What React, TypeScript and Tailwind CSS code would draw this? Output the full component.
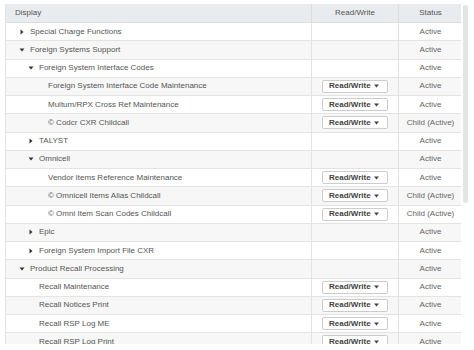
type Row = {
  label: string;
  level: number;
  caret?: "open" | "closed";
  rw?: boolean;
  status: string;
};

const rows: Row[] = [
  { label: "Special Charge Functions", level: 0, caret: "closed", status: "Active" },
  { label: "Foreign Systems Support", level: 0, caret: "open", status: "Active" },
  { label: "Foreign System Interface Codes", level: 1, caret: "open", status: "Active" },
  { label: "Foreign System Interface Code Maintenance", level: 2, rw: true, status: "Active" },
  { label: "Multum/RPX Cross Ref Maintenance", level: 2, rw: true, status: "Active" },
  { label: "© Codcr CXR Childcall", level: 2, rw: true, status: "Child (Active)" },
  { label: "TALYST", level: 1, caret: "closed", status: "Active" },
  { label: "Omnicell", level: 1, caret: "open", status: "Active" },
  { label: "Vendor Items Reference Maintenance", level: 2, rw: true, status: "Active" },
  { label: "© Omnicell Items Alias Childcall", level: 2, rw: true, status: "Child (Active)" },
  { label: "© Omni Item Scan Codes Childcall", level: 2, rw: true, status: "Child (Active)" },
  { label: "Epic", level: 1, caret: "closed", status: "Active" },
  { label: "Foreign System Import File CXR", level: 1, caret: "closed", status: "Active" },
  { label: "Product Recall Processing", level: 0, caret: "open", status: "Active" },
  { label: "Recall Maintenance", level: 1, rw: true, status: "Active" },
  { label: "Recall Notices Print", level: 1, rw: true, status: "Active" },
  { label: "Recall RSP Log ME", level: 1, rw: true, status: "Active" },
  { label: "Recall RSP Log Print", level: 1, rw: true, status: "Active" },
];

// caret rows: caret box starts here; leaf rows: text starts one level deeper
const caretIndent = ["pl-[13px]", "pl-[22px]", "pl-[31px]"];
const leafIndent = ["pl-[24px]", "pl-[33px]", "pl-[42px]"];

const Caret = ({ dir }: { dir: "open" | "closed" }) => (
  <svg width="11" height="8" viewBox="0 0 11 8" className="shrink-0">
    {dir === "open" ? (
      <polygon points="0.5,2.5 5.5,2.5 3,5.5" fill="#333" />
    ) : (
      <polygon points="1.5,1.5 4.5,4 1.5,6.5" fill="#333" />
    )}
  </svg>
);

const RwSelect = () => (
  <div className="flex items-center justify-between w-[66px] h-[13px] border border-[#ccc] rounded-[2px] bg-white pl-[6px] pr-[8px] text-[8px] font-bold text-[#444]">
    <span>Read/Write</span>
    <svg width="5" height="4" viewBox="0 0 5 4">
      <polygon points="0,0.5 5,0.5 2.5,3.5" fill="#444" />
    </svg>
  </div>
);

export default function App() {
  return (
    <div className="w-[474px] h-[350px] bg-white overflow-hidden font-['Liberation_Sans',Arial,sans-serif] text-[8px] text-[#555]">
      <div className="flex pl-[5px] pt-[4px] h-[344px] overflow-hidden">
        <div className="w-[456px] border-l border-[#e3e3e3]">
          <div className="grid grid-cols-[305px_87px_64px] h-[19px] bg-[#e9ecef] border-b border-[#dcdcdc]">
            <div className="flex items-center pl-[9px]">Display</div>
            <div className="flex items-center justify-center border-l border-[#dcdcdc]">Read/Write</div>
            <div className="flex items-center justify-center border-l border-[#dcdcdc]">Status</div>
          </div>
          {rows.map((r, i) => (
            <div
              key={i}
              className={`grid grid-cols-[305px_87px_64px] h-[18.25px] border-b border-[#e3e3e3] ${
                i % 2 === 1 ? "bg-[#f7f7f7]" : "bg-white"
              }`}
            >
              <div className={`flex items-center ${r.caret ? caretIndent[r.level] : leafIndent[r.level]}`}>
                {r.caret && <Caret dir={r.caret} />}
                <span className="whitespace-nowrap">{r.label}</span>
              </div>
              <div className="flex items-center justify-center border-l border-[#e3e3e3]">
                {r.rw && <RwSelect />}
              </div>
              <div className="flex items-center justify-center border-l border-[#e3e3e3] text-[#666]">{r.status}</div>
            </div>
          ))}
        </div>
        <div className="ml-[2px] mt-[1px] w-[5px] h-[198px] rounded-[2px] bg-[#e4e4e4]" />
      </div>
    </div>
  );
}
